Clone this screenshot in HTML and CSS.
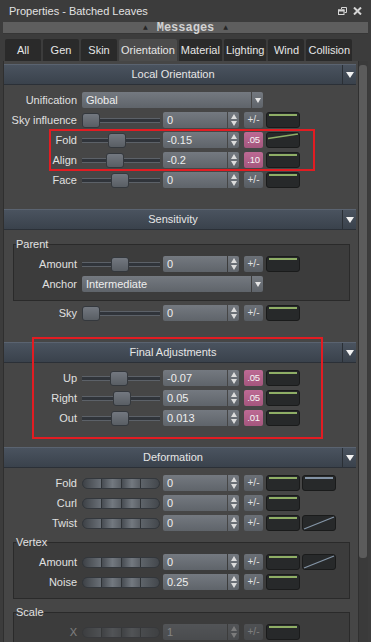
FILE: index.html
```html
<!DOCTYPE html>
<html lang="en">
    <head>
        <meta charset="UTF-8" />
        <meta name="viewport" content="width=device-width, initial-scale=1.0" />
        <title>Properties - Batched Leaves</title>
        <link rel="stylesheet" href="styles.css">
    </head>
    <body>
        <div class="titlebar">
            <span class="title">Properties - Batched Leaves</span>
            <span class="win-buttons">
                <svg width="9" height="8" viewBox="0 0 9 8">
                    <path d="M3.5 2V0.5H8.5V5.5H6.5" fill="none" stroke="#d6d6d6" stroke-width="1"/>
                    <rect x="0.5" y="3" width="5.5" height="4.5" fill="none" stroke="#d6d6d6" stroke-width="1"/>
                    <rect x="0" y="2.5" width="6.5" height="2" fill="#d6d6d6"/>
                </svg>
                <svg width="9" height="8" viewBox="0 0 9 8">
                    <path d="M1 0.5L8 7.5M8 0.5L1 7.5" stroke="#d6d6d6" stroke-width="2"/>
                </svg>
            </span>
        </div>
        <div class="messages"><span class="tri">&#9650;</span>Messages<span class="tri">&#9650;</span></div>
        <div class="tabs">
            <span class="tab">All</span>
            <span class="tab">Gen</span>
            <span class="tab">Skin</span>
            <span class="tab active">Orientation</span>
            <span class="tab">Material</span>
            <span class="tab">Lighting</span>
            <span class="tab">Wind</span>
            <span class="tab">Collision</span>
        </div>
        <div class="panel">
            <div class="content">
                <!-- Local Orientation -->
                <div class="section-head"><span class="section-title">Local Orientation</span><span class="collapse"></span></div>
                <div class="section-body">
                    <div class="row">
                        <span class="lbl">Unification</span>
                        <div class="combo"><span class="combo-val">Global</span><span class="combo-arrow"></span></div>
                    </div>
                    <div class="row">
                        <span class="lbl">Sky influence</span>
                        <div class="slider"><span class="handle" style="margin-left:0px"></span></div>
                        <div class="spin"><span class="spin-val">0</span><span class="spin-btns"></span></div>
                        <span class="pm">+/-</span>
                        <span class="curve line"></span>
                    </div>
                    <div class="row">
                        <span class="lbl">Fold</span>
                        <div class="slider"><span class="handle" style="margin-left:26px"></span></div>
                        <div class="spin"><span class="spin-val">-0.15</span><span class="spin-btns"></span></div>
                        <span class="pm pink">.05</span>
                        <span class="curve"><svg width="34" height="16" viewBox="0 0 34 16"><path d="M2 6.5L32 2" stroke="#8fae66" stroke-width="1.3"/></svg></span>
                    </div>
                    <div class="row">
                        <span class="lbl">Align</span>
                        <div class="slider"><span class="handle" style="margin-left:24px"></span></div>
                        <div class="spin"><span class="spin-val">-0.2</span><span class="spin-btns"></span></div>
                        <span class="pm pink">.10</span>
                        <span class="curve line"></span>
                    </div>
                    <div class="row">
                        <span class="lbl">Face</span>
                        <div class="slider"><span class="handle" style="margin-left:29px"></span></div>
                        <div class="spin"><span class="spin-val">0</span><span class="spin-btns"></span></div>
                        <span class="pm">+/-</span>
                        <span class="curve line"></span>
                    </div>
                </div>

                <!-- Sensitivity -->
                <div class="section-head"><span class="section-title">Sensitivity</span><span class="collapse"></span></div>
                <div class="section-body">
                    <fieldset class="group">
                        <legend>Parent</legend>
                        <div class="row">
                            <span class="lbl">Amount</span>
                            <div class="slider"><span class="handle" style="margin-left:29px"></span></div>
                            <div class="spin"><span class="spin-val">0</span><span class="spin-btns"></span></div>
                            <span class="pm">+/-</span>
                            <span class="curve line"></span>
                        </div>
                        <div class="row">
                            <span class="lbl">Anchor</span>
                            <div class="combo"><span class="combo-val">Intermediate</span><span class="combo-arrow"></span></div>
                        </div>
                    </fieldset>
                    <div class="row">
                        <span class="lbl">Sky</span>
                        <div class="slider"><span class="handle" style="margin-left:0px"></span></div>
                        <div class="spin"><span class="spin-val">0</span><span class="spin-btns"></span></div>
                        <span class="pm">+/-</span>
                        <span class="curve line"></span>
                    </div>
                </div>

                <!-- Final Adjustments -->
                <div class="section-head"><span class="section-title">Final Adjustments</span><span class="collapse"></span></div>
                <div class="section-body">
                    <div class="row">
                        <span class="lbl">Up</span>
                        <div class="slider"><span class="handle" style="margin-left:28px"></span></div>
                        <div class="spin"><span class="spin-val">-0.07</span><span class="spin-btns"></span></div>
                        <span class="pm pink">.05</span>
                        <span class="curve line"></span>
                    </div>
                    <div class="row">
                        <span class="lbl">Right</span>
                        <div class="slider"><span class="handle" style="margin-left:31px"></span></div>
                        <div class="spin"><span class="spin-val">0.05</span><span class="spin-btns"></span></div>
                        <span class="pm pink">.05</span>
                        <span class="curve line"></span>
                    </div>
                    <div class="row">
                        <span class="lbl">Out</span>
                        <div class="slider"><span class="handle" style="margin-left:29px"></span></div>
                        <div class="spin"><span class="spin-val">0.013</span><span class="spin-btns"></span></div>
                        <span class="pm pink">.01</span>
                        <span class="curve line"></span>
                    </div>
                </div>

                <!-- Deformation -->
                <div class="section-head"><span class="section-title">Deformation</span><span class="collapse"></span></div>
                <div class="section-body">
                    <div class="row">
                        <span class="lbl">Fold</span>
                        <div class="seg"><span></span><span></span><span></span><span></span></div>
                        <div class="spin"><span class="spin-val">0</span><span class="spin-btns"></span></div>
                        <span class="pm">+/-</span>
                        <span class="curve line"></span>
                        <span class="curve curve2 line-blue"></span>
                    </div>
                    <div class="row">
                        <span class="lbl">Curl</span>
                        <div class="seg"><span></span><span></span><span></span><span></span></div>
                        <div class="spin"><span class="spin-val">0</span><span class="spin-btns"></span></div>
                        <span class="pm">+/-</span>
                        <span class="curve line"></span>
                    </div>
                    <div class="row">
                        <span class="lbl">Twist</span>
                        <div class="seg"><span></span><span></span><span></span><span></span></div>
                        <div class="spin"><span class="spin-val">0</span><span class="spin-btns"></span></div>
                        <span class="pm">+/-</span>
                        <span class="curve line"></span>
                        <span class="curve curve2"><svg width="34" height="16" viewBox="0 0 34 16"><path d="M2 14L32 2" stroke="#8494a6" stroke-width="1.2"/></svg></span>
                    </div>
                    <fieldset class="group">
                        <legend>Vertex</legend>
                        <div class="row">
                            <span class="lbl">Amount</span>
                            <div class="seg"><span></span><span></span><span></span><span></span></div>
                            <div class="spin"><span class="spin-val">0</span><span class="spin-btns"></span></div>
                            <span class="pm">+/-</span>
                            <span class="curve line"></span>
                            <span class="curve curve2"><svg width="34" height="16" viewBox="0 0 34 16"><path d="M2 14L32 2" stroke="#8494a6" stroke-width="1.2"/></svg></span>
                        </div>
                        <div class="row">
                            <span class="lbl">Noise</span>
                            <div class="seg"><span></span><span></span><span></span><span></span></div>
                            <div class="spin"><span class="spin-val">0.25</span><span class="spin-btns"></span></div>
                            <span class="pm">+/-</span>
                            <span class="curve line"></span>
                        </div>
                    </fieldset>
                    <fieldset class="group group-scale">
                        <legend>Scale</legend>
                        <div class="row">
                            <span class="lbl dim">X</span>
                            <div class="seg dim"><span></span><span></span><span></span><span></span></div>
                            <div class="spin dim"><span class="spin-val">1</span><span class="spin-btns"></span></div>
                            <span class="pm dim">+/-</span>
                            <span class="curve line"></span>
                        </div>
                    </fieldset>
                </div>
            </div>
            <div class="scrollbar"><div class="thumb"></div></div>
        </div>

        <div class="mark mark-top"></div>
        <div class="mark mark-final"></div>
    </body>
</html>
```

FILE: styles.css
```css
* {
    box-sizing: border-box;
}
html,
body {
    margin: 0;
}
body {
    position: relative;
    width: 371px;
    height: 642px;
    overflow: hidden;
    background: #3c3c3c;
    font-family: 'Liberation Sans', Arial, sans-serif;
    font-size: 11px;
    color: #dedede;
}

/* window chrome */
.titlebar {
    height: 21px;
    display: flex;
    align-items: center;
    justify-content: space-between;
    padding: 0 9px 0 9px;
}
.title {
    color: #e2e2e2;
}
.win-buttons {
    display: flex;
    gap: 6px;
    align-items: center;
}
.messages {
    margin: 1px 3px 0;
    height: 12px;
    background: #5e5e5e;
    border-bottom: 1px solid #363636;
    display: flex;
    justify-content: center;
    align-items: center;
    gap: 9px;
    font-family: 'Liberation Mono', monospace;
    font-weight: bold;
    font-size: 12px;
    line-height: 12px;
    color: #d2d2d2;
}
.messages .tri {
    color: #262626;
    font-size: 8px;
}
.tabs {
    display: flex;
    gap: 2px;
    padding: 5px 5px 0;
}
.tab {
    height: 22px;
    min-width: 36px;
    padding: 0 2px;
    background: #2a2a2a;
    border-radius: 2px 2px 0 0;
    display: flex;
    align-items: center;
    justify-content: center;
    color: #e6e6e6;
}
.tab.active {
    background: #4c4c4c;
}

/* panel */
.panel {
    display: flex;
    margin: 0 3px;
    height: 581px;
    background: #464646;
    border-left: 1px solid #2f2f2f;
    padding-top: 3px;
}
.content {
    width: 353px;
    overflow: hidden;
}
.scrollbar {
    width: 10px;
    margin-left: 1px;
    margin-top: -3px;
    background: #3a3a3a;
    border-left: 1px solid #303030;
    padding: 4px 0 0 0;
}
.thumb {
    width: 8px;
    height: 493px;
    background: #5b5b5b;
    border-radius: 3px;
}

.section-head {
    display: flex;
    height: 21px;
    margin-right: 1px;
    background: linear-gradient(#4a535f, #3a424c);
    border-top: 1px solid #5a6370;
    border-bottom: 1px solid #2b3037;
}
.section-title {
    flex: 1;
    text-align: center;
    line-height: 19px;
    color: #e6e6e6;
}
.collapse {
    width: 14px;
    border-left: 1px solid #2a2f35;
    display: flex;
    align-items: center;
    justify-content: center;
}
.collapse::after {
    content: "";
    border-left: 4px solid transparent;
    border-right: 4px solid transparent;
    border-top: 6px solid #f2f2f2;
}
.section-body {
    display: flex;
    flex-direction: column;
    gap: 4px;
    padding: 7px 0 21px;
}

/* group boxes */
.group {
    margin: 1px 7px 0 9px;
    padding: 6px 0 8px;
    border: 1px solid #2a2a2a;
    background: #3c3c3c;
    display: flex;
    flex-direction: column;
    gap: 4px;
    min-width: 0;
}
.group legend {
    padding: 0;
    margin-left: 2px;
    line-height: 12px;
    color: #e2e2e2;
}
.group-scale {
    margin-top: 3px;
}
.group .lbl {
    width: 63px;
}

/* rows */
.row {
    display: flex;
    height: 16px;
    align-items: stretch;
}
.lbl {
    width: 73px;
    text-align: right;
    line-height: 16px;
    color: #e0e0e0;
    white-space: nowrap;
}
.slider {
    width: 78px;
    margin-left: 5px;
    display: flex;
    align-items: center;
    background:
        linear-gradient(#30343a, #30343a) center / 100% 3px no-repeat,
        linear-gradient(#5c6168, #5c6168) center / 100% 5px no-repeat;
}
.handle {
    width: 18px;
    height: 15px;
    border-radius: 3px;
    background: linear-gradient(#737880, #595e64);
    border: 1px solid #34383d;
}
.seg {
    width: 78px;
    height: 11px;
    margin-left: 5px;
    align-self: center;
    display: flex;
    gap: 1px;
    border-radius: 6px;
    overflow: hidden;
    border: 1px solid #33373c;
    background: #2f3337;
}
.seg span {
    flex: 1;
    background: linear-gradient(to right, #474c52, #737980 55%, #5a5f65);
}
.seg span:first-child {
    background: linear-gradient(to right, #3e4247, #6a7077);
}
.seg span:last-child {
    background: linear-gradient(to right, #5e646a, #43474c);
}

.spin {
    width: 76px;
    margin-left: 3px;
    display: flex;
    gap: 1px;
}
.spin-val {
    flex: 1;
    padding-left: 4px;
    line-height: 16px;
    color: #eeeeee;
    background: linear-gradient(#747980, #5f646a);
    border-radius: 2px 0 0 2px;
}
.spin-btns {
    width: 11px;
    background: linear-gradient(#747980, #5f646a);
    border-radius: 0 2px 2px 0;
    display: flex;
    flex-direction: column;
    align-items: center;
    justify-content: center;
    gap: 2px;
}
.spin-btns::before {
    content: "";
    border-left: 3.5px solid transparent;
    border-right: 3.5px solid transparent;
    border-bottom: 5px solid #dcdcdc;
}
.spin-btns::after {
    content: "";
    border-left: 3.5px solid transparent;
    border-right: 3.5px solid transparent;
    border-top: 5px solid #dcdcdc;
}

.combo {
    width: 181px;
    margin-left: 5px;
    display: flex;
    gap: 1px;
}
.combo-val {
    flex: 1;
    padding-left: 4px;
    line-height: 16px;
    color: #eeeeee;
    background: linear-gradient(#747980, #5f646a);
    border-radius: 2px 0 0 2px;
}
.combo-arrow {
    width: 11px;
    background: linear-gradient(#747980, #5f646a);
    border-radius: 0 2px 2px 0;
    display: flex;
    align-items: center;
    justify-content: center;
}
.combo-arrow::after {
    content: "";
    border-left: 3.5px solid transparent;
    border-right: 3.5px solid transparent;
    border-top: 5px solid #e6e6e6;
}

.pm {
    width: 19px;
    margin-left: 5px;
    border-radius: 2px;
    background: linear-gradient(#6b7077, #575c62);
    color: #e2e2e2;
    font-size: 10px;
    line-height: 16px;
    text-align: center;
    white-space: nowrap;
}
.pm.pink {
    background: linear-gradient(#bd6a94, #a4567d);
    color: #f6f6f6;
    font-size: 9.5px;
    letter-spacing: -0.2px;
}

.curve {
    position: relative;
    width: 34px;
    margin-left: 3px;
    background: #27292a;
    border: 1px solid #1a1b1b;
    border-radius: 3px;
    overflow: hidden;
}
.curve svg {
    display: block;
    margin: -1px;
}
.curve2 {
    margin-left: 2px;
}
.curve.line::before,
.curve.line-blue::before {
    content: "";
    display: block;
    margin: 1px 2px 0;
    height: 2px;
    background: #8fae66;
}
.curve.line-blue::before {
    background: #8393a5;
}

.dim {
    opacity: 0.4;
}

/* red annotation frames drawn over the panel */
.mark {
    position: absolute;
    border: 2px solid #e21c22;
}
.mark-top {
    left: 49px;
    top: 129px;
    width: 266px;
    height: 42px;
}
.mark-final {
    left: 32px;
    top: 337px;
    width: 291px;
    height: 102px;
}
```
